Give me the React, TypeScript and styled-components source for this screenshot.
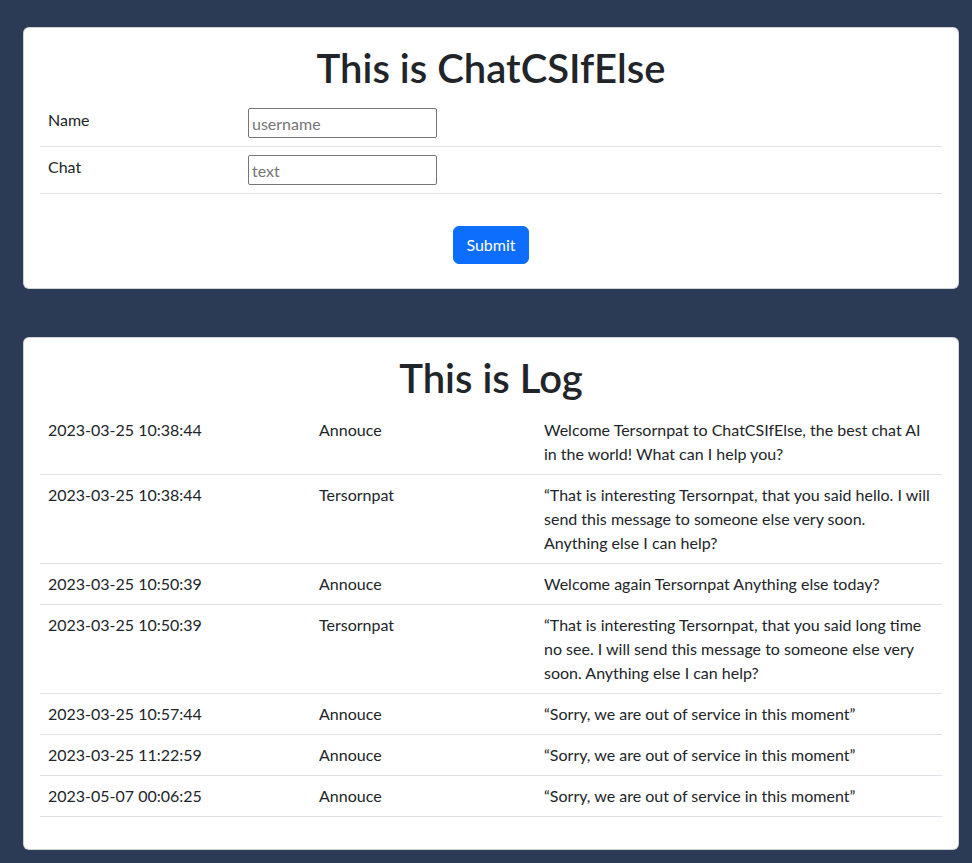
import React from 'react';
import styled, { createGlobalStyle } from 'styled-components';

const GlobalStyle = createGlobalStyle`
    html, body {
        margin: 0;
        padding: 0;
        background: #2b3a55;
    }
    body {
        font-family: 'Segoe UI', Lato, 'Liberation Sans', sans-serif;
        font-size: 16px;
        line-height: 1.5;
        color: #212529;
    }
`;

const StyledPage = styled.div`
    padding: 27px 13px 13px 23px;
    display: flex;
    flex-direction: column;
    gap: 48px;
`;

const StyledCard = styled.section`
    background: #ffffff;
    border: 1px solid rgba(0, 0, 0, 0.175);
    border-radius: 6px;
    padding: 16px;
`;

const StyledTitle = styled.h1`
    margin: 0 0 8px;
    font-size: 40px;
    font-weight: 600;
    line-height: 1.2;
    text-align: center;
`;

const StyledTable = styled.div<{ columns: string }>`
    display: grid;
    grid-template-columns: ${(props) => props.columns};
    margin-bottom: 16px;
`;

const StyledCell = styled.div<{ wide?: boolean }>`
    padding: ${(props) => (props.wide ? '8px 11px 8px 8px' : '8px')};
    border-bottom: 1px solid #dee2e6;
    min-height: 24px;
`;

const StyledInput = styled.input`
    box-sizing: border-box;
    width: 189px;
    height: 30px;
    margin: 0;
    padding: 1px 3px;
    font-family: inherit;
    font-size: 16px;
    color: #212529;
    border: 1px solid #767676;
    border-radius: 2px;
    display: block;

    &::placeholder {
        color: #757575;
    }
`;

const StyledActions = styled.div`
    display: flex;
    justify-content: center;
    padding: 16px 0 8px;
`;

const StyledButton = styled.button`
    font-family: inherit;
    font-size: 16px;
    line-height: 1.5;
    color: #ffffff;
    background: #0d6efd;
    border: 1px solid #0d6efd;
    border-radius: 6px;
    padding: 6px 12px;
    cursor: pointer;
`;

type LogEntry = {
    time: string;
    sender: string;
    message: string;
};

const logs: LogEntry[] = [
    {
        time: '2023-03-25 10:38:44',
        sender: 'Annouce',
        message: 'Welcome Tersornpat to ChatCSIfElse, the best chat AI in the world! What can I help you?',
    },
    {
        time: '2023-03-25 10:38:44',
        sender: 'Tersornpat',
        message:
            '\u201cThat is interesting Tersornpat, that you said hello. I will send this message to someone else very soon. Anything else I can help?',
    },
    {
        time: '2023-03-25 10:50:39',
        sender: 'Annouce',
        message: 'Welcome again Tersornpat Anything else today?',
    },
    {
        time: '2023-03-25 10:50:39',
        sender: 'Tersornpat',
        message:
            '\u201cThat is interesting Tersornpat, that you said long time no see. I will send this message to someone else very soon. Anything else I can help?',
    },
    { time: '2023-03-25 10:57:44', sender: 'Annouce', message: '\u201cSorry, we are out of service in this moment\u201d' },
    { time: '2023-03-25 11:22:59', sender: 'Annouce', message: '\u201cSorry, we are out of service in this moment\u201d' },
    { time: '2023-05-07 00:06:25', sender: 'Annouce', message: '\u201cSorry, we are out of service in this moment\u201d' },
];

const ChatForm = () => (
    <StyledCard>
        <StyledTitle>This is ChatCSIfElse</StyledTitle>
        <StyledTable columns="200px 1fr">
            <StyledCell>Name</StyledCell>
            <StyledCell>
                <StyledInput placeholder="username" />
            </StyledCell>
            <StyledCell>Chat</StyledCell>
            <StyledCell>
                <StyledInput placeholder="text" />
            </StyledCell>
        </StyledTable>
        <StyledActions>
            <StyledButton type="button">Submit</StyledButton>
        </StyledActions>
    </StyledCard>
);

const ChatLog = () => (
    <StyledCard>
        <StyledTitle>This is Log</StyledTitle>
        <StyledTable columns="271px 225px 1fr">
            {logs.map((log, i) => (
                <React.Fragment key={i}>
                    <StyledCell>{log.time}</StyledCell>
                    <StyledCell>{log.sender}</StyledCell>
                    <StyledCell wide>{log.message}</StyledCell>
                </React.Fragment>
            ))}
        </StyledTable>
    </StyledCard>
);

export default function App() {
    return (
        <>
            <GlobalStyle />
            <StyledPage>
                <ChatForm />
                <ChatLog />
            </StyledPage>
        </>
    );
}
